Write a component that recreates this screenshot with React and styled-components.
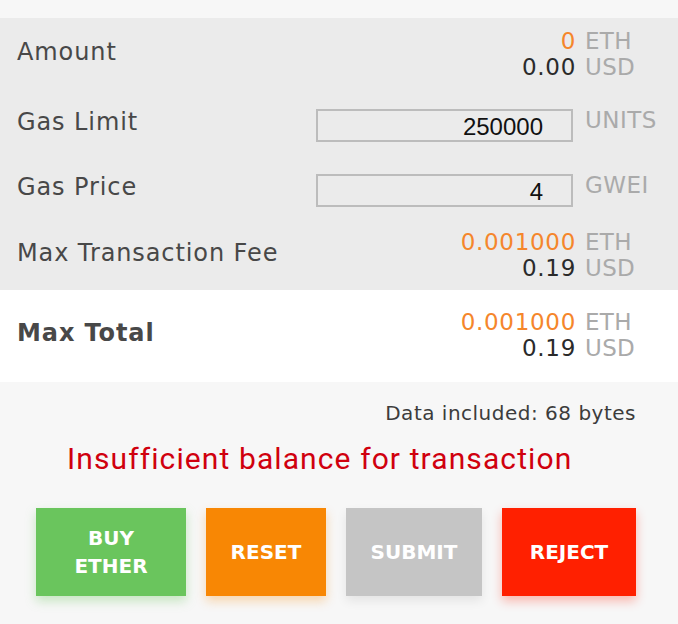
import styled, { createGlobalStyle } from "styled-components"

const GlobalStyle = createGlobalStyle`
  html, body {
    margin: 0;
    padding: 0;
    background: #f7f7f7;
  }
  body {
    font-family: "DejaVu Sans", "Noto Sans", sans-serif;
    color: #444;
  }
`

const Page = styled.div`
  width: 678px;
  height: 624px;
  overflow: hidden;
  background: #f7f7f7;
  padding-top: 18px;
  box-sizing: border-box;
`

const GraySection = styled.section`
  background: #ebebeb;
`

const WhiteSection = styled.section`
  background: #ffffff;
`

const Row = styled.div`
  display: flex;
  align-items: center;
  justify-content: space-between;
  height: ${(p) => p.$height}px;
  padding: 0 42px 0 17px;
`

const Label = styled.div`
  font-size: 24px;
  letter-spacing: 0.9px;
  color: #484848;
  font-weight: ${(p) => (p.$bold ? 700 : 400)};
  margin-top: -6px;
`

const Amounts = styled.div`
  display: grid;
  grid-template-columns: auto 51px;
  column-gap: 9px;
  font-size: 23px;
  line-height: 26px;
  letter-spacing: 0.7px;
  margin-top: -2px;
`

const Value = styled.span`
  text-align: right;
  color: ${(p) => (p.$accent ? "#f5862b" : "#2a2a2a")};
`

const Unit = styled.span`
  color: #aaaaaa;
  white-space: nowrap;
  letter-spacing: 0.3px;
`

const InputGroup = styled.div`
  display: flex;
  align-items: flex-start;
  gap: 12px;
`

const NumberInput = styled.input`
  width: 257px;
  height: 33px;
  box-sizing: border-box;
  border: 2px solid #bcbcbc;
  background: transparent;
  font-family: "Liberation Sans", Arial, sans-serif;
  font-size: 24px;
  color: #111;
  text-align: right;
  padding: 4px 28px 0 0;
  outline: none;
`

const InputUnit = styled(Unit)`
  width: 51px;
  font-size: 23px;
  line-height: 26px;
  margin-top: -2px;
  letter-spacing: 0.5px;
`

const Footer = styled.div`
  display: flex;
  flex-direction: column;
`

const DataNote = styled.div`
  text-align: right;
  padding: 18px 42px 0 0;
  font-size: 20px;
  line-height: 26px;
  letter-spacing: 0.5px;
  color: #3c3c3c;
`

const ErrorText = styled.div`
  padding: 15px 0 0 67px;
  font-family: Roboto, "Noto Sans", sans-serif;
  font-size: 30px;
  line-height: 36px;
  color: #d0000e;
  letter-spacing: 1.1px;
`

const ButtonRow = styled.div`
  display: flex;
  gap: 20px;
  padding: 31px 0 0 36px;
`

const ActionButton = styled.button`
  width: ${(p) => p.$width}px;
  height: 88px;
  border: none;
  background: ${(p) => p.$bg};
  box-shadow: 0 5px 10px ${(p) => p.$glow};
  color: #fff;
  font-family: "DejaVu Sans", sans-serif;
  font-weight: 700;
  font-size: 20px;
  line-height: 28px;
  text-transform: uppercase;
  padding: 0 10px;
  cursor: pointer;
`

function AmountPair({ eth, usd }) {
  return (
    <Amounts>
      <Value $accent>{eth}</Value>
      <Unit>ETH</Unit>
      <Value>{usd}</Value>
      <Unit>USD</Unit>
    </Amounts>
  )
}

function InputRow({ label, value, unit, height }) {
  return (
    <Row $height={height}>
      <Label>{label}</Label>
      <InputGroup>
        <NumberInput type="text" defaultValue={value} />
        <InputUnit>{unit}</InputUnit>
      </InputGroup>
    </Row>
  )
}

export default function App() {
  return (
    <>
      <GlobalStyle />
      <Page>
        <GraySection>
          <Row $height={74}>
            <Label>Amount</Label>
            <AmountPair eth="0" usd="0.00" />
          </Row>
          <InputRow label="Gas Limit" value="250000" unit="UNITS" height={66} />
          <InputRow label="Gas Price" value="4" unit="GWEI" height={64} />
          <Row $height={68}>
            <Label>Max Transaction Fee</Label>
            <AmountPair eth="0.001000" usd="0.19" />
          </Row>
        </GraySection>
        <WhiteSection>
          <Row $height={92}>
            <Label $bold>Max Total</Label>
            <AmountPair eth="0.001000" usd="0.19" />
          </Row>
        </WhiteSection>
        <Footer>
          <DataNote>Data included: 68 bytes</DataNote>
          <ErrorText>Insufficient balance for transaction</ErrorText>
          <ButtonRow>
            <ActionButton $width={150} $bg="#6ac55d" $glow="rgba(106,197,93,0.35)">
              Buy
              <br />
              Ether
            </ActionButton>
            <ActionButton $width={120} $bg="#f88704" $glow="rgba(248,135,4,0.3)">
              Reset
            </ActionButton>
            <ActionButton $width={136} $bg="#c5c5c5" $glow="rgba(0,0,0,0.08)">
              Submit
            </ActionButton>
            <ActionButton $width={134} $bg="#ff2000" $glow="rgba(255,32,0,0.3)">
              Reject
            </ActionButton>
          </ButtonRow>
        </Footer>
      </Page>
    </>
  )
}
